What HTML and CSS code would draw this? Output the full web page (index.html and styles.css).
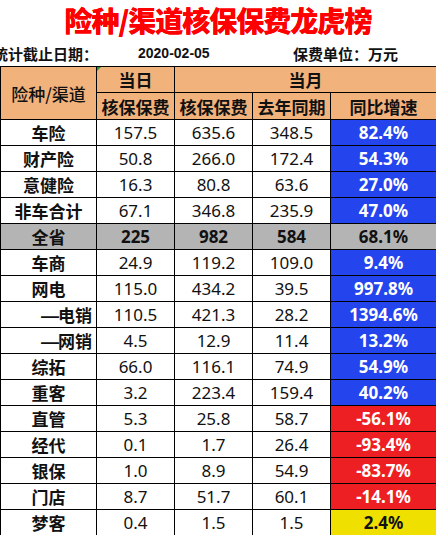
FILE: index.html
```html
<!DOCTYPE html>
<html lang="zh-CN">

<head>
    <meta charset="UTF-8">
    <meta name="viewport" content="width=device-width, initial-scale=1.0">
    <title>险种/渠道核保保费龙虎榜</title>
    <link rel="stylesheet" href="styles.css">
</head>

<body>
    <div class="sheet">
        <h1 class="title">险种/渠道核保保费龙虎榜</h1>

        <div class="info">
            <span class="info-label">统计截止日期：</span>
            <span class="info-date">2020-02-05</span>
            <span class="info-unit">保费单位：万元</span>
        </div>

        <table class="board">
            <colgroup>
                <col class="col-name">
                <col class="col-num">
                <col class="col-num">
                <col class="col-num">
                <col class="col-rate">
            </colgroup>
            <thead>
                <tr class="head-top">
                    <th rowspan="2" class="head-name">险种/渠道</th>
                    <th class="flagged">当日</th>
                    <th colspan="3">当月</th>
                </tr>
                <tr class="head-sub">
                    <th>核保保费</th>
                    <th>核保保费</th>
                    <th>去年同期</th>
                    <th>同比增速</th>
                </tr>
            </thead>
            <tbody>
                <tr><td class="name">车险</td><td>157.5</td><td>635.6</td><td>348.5</td><td class="rate up">82.4%</td></tr>
                <tr><td class="name">财产险</td><td>50.8</td><td>266.0</td><td>172.4</td><td class="rate up">54.3%</td></tr>
                <tr><td class="name">意健险</td><td>16.3</td><td>80.8</td><td>63.6</td><td class="rate up">27.0%</td></tr>
                <tr><td class="name">非车合计</td><td>67.1</td><td>346.8</td><td>235.9</td><td class="rate up">47.0%</td></tr>
                <tr class="total"><td class="name">全省</td><td>225</td><td>982</td><td>584</td><td class="rate">68.1%</td></tr>
                <tr><td class="name">车商</td><td>24.9</td><td>119.2</td><td>109.0</td><td class="rate up">9.4%</td></tr>
                <tr><td class="name">网电</td><td>115.0</td><td>434.2</td><td>39.5</td><td class="rate up">997.8%</td></tr>
                <tr><td class="name sub"><span class="dash">—</span>电销</td><td>110.5</td><td>421.3</td><td>28.2</td><td class="rate up">1394.6%</td></tr>
                <tr><td class="name sub"><span class="dash">—</span>网销</td><td>4.5</td><td>12.9</td><td>11.4</td><td class="rate up">13.2%</td></tr>
                <tr><td class="name">综拓</td><td>66.0</td><td>116.1</td><td>74.9</td><td class="rate up">54.9%</td></tr>
                <tr><td class="name">重客</td><td>3.2</td><td>223.4</td><td>159.4</td><td class="rate up">40.2%</td></tr>
                <tr><td class="name">直管</td><td>5.3</td><td>25.8</td><td>58.7</td><td class="rate down">-56.1%</td></tr>
                <tr><td class="name">经代</td><td>0.1</td><td>1.7</td><td>26.4</td><td class="rate down">-93.4%</td></tr>
                <tr><td class="name">银保</td><td>1.0</td><td>8.9</td><td>54.9</td><td class="rate down">-83.7%</td></tr>
                <tr><td class="name">门店</td><td>8.7</td><td>51.7</td><td>60.1</td><td class="rate down">-14.1%</td></tr>
                <tr><td class="name">梦客</td><td>0.4</td><td>1.5</td><td>1.5</td><td class="rate flat">2.4%</td></tr>
            </tbody>
        </table>
    </div>
</body>

</html>
```

FILE: styles.css
```css
body {
    margin: 0;
    padding: 0;
    background: #ffffff;
    font-family: "Noto Sans", "Noto Sans CJK SC", sans-serif;
    color: #111111;
}

.sheet {
    width: 436px;
    overflow: hidden;
}

/* Title */
.title {
    margin: 0;
    height: 40px;
    line-height: 40px;
    font-size: 28px;
    font-weight: 900;
    color: #ff0000;
    text-align: center;
    font-family: "Noto Sans CJK SC", sans-serif;
    letter-spacing: -1px;
    text-shadow: 0 0 0.6px #ff0000;
}

/* Date / unit line */
.info {
    display: grid;
    grid-template-columns: 145px 155px auto;
    height: 26px;
    align-items: center;
    margin-left: -7px;
    font-size: 15px;
    font-weight: 700;
    font-family: "Noto Sans CJK SC", sans-serif;
}

.info-date {
    font-size: 14px;
    font-family: "Liberation Sans", Arial, sans-serif;
}

/* Table */
.board {
    border-collapse: collapse;
    table-layout: fixed;
    width: 436px;
}

.col-name {
    width: 96px;
}

.col-num {
    width: 78px;
}

.col-rate {
    width: 106px;
}

.board th,
.board td {
    border: 1px solid #000;
    padding: 0;
    text-align: center;
    vertical-align: middle;
    white-space: nowrap;
}

.board th {
    background: #f2b27c;
    font-family: "Noto Sans CJK SC", sans-serif;
    font-size: 17px;
    font-weight: 700;
}

.head-top th {
    height: 25px;
}

.head-sub th {
    height: 26px;
}

.head-name {
    font-weight: 500 !important;
}

.flagged {
    position: relative;
}

.flagged::before {
    content: "";
    position: absolute;
    left: 0;
    top: 0;
    border-top: 4px solid #1f9a3a;
    border-right: 4px solid transparent;
}

.board td {
    height: 24.875px;
    font-size: 17px;
}

.board td.name {
    font-family: "Noto Sans CJK SC", sans-serif;
    font-weight: 700;
}

.board td.sub {
    text-align: right;
    padding-right: 4px;
}

.dash {
    font-family: "Liberation Sans", Arial, sans-serif;
    font-weight: 700;
    font-size: 18px;
    letter-spacing: -1px;
}

.rate {
    font-weight: 700;
}

.rate.up {
    background: #2444ee;
    color: #ffffff;
}

.rate.down {
    background: #ee1f23;
    color: #ffffff;
}

.rate.flat {
    background: #f0e000;
    color: #111111;
}

.total td {
    background: #b4b4b4;
    font-weight: 700;
}
```
